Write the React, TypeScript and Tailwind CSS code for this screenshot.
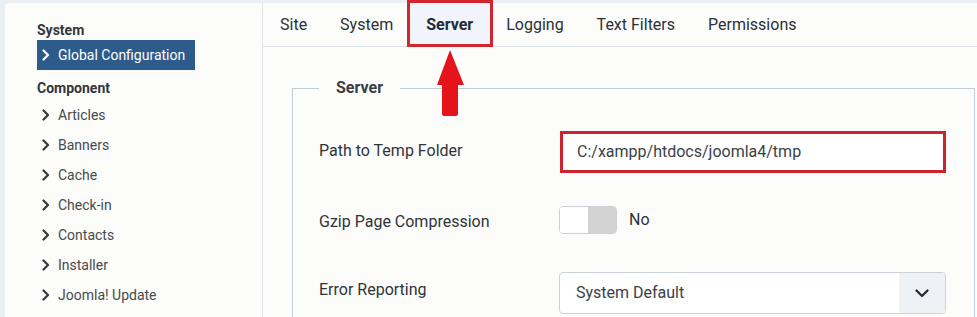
import React from 'react';

const font = { fontFamily: 'Roboto, "Liberation Sans", sans-serif' };

const sideItems = ['Articles', 'Banners', 'Cache', 'Check-in', 'Contacts', 'Installer', 'Joomla! Update'];
const tabs = ['Site', 'System', 'Server', 'Logging', 'Text Filters', 'Permissions'];

function Chevron({ className }: { className?: string }) {
  return (
    <svg width="8" height="12" viewBox="0 0 8 12" className={className}>
      <polyline points="1.5,1.5 6,6 1.5,10.5" fill="none" stroke="currentColor" strokeWidth="2.2" strokeLinecap="round" strokeLinejoin="round" />
    </svg>
  );
}

function Sidebar() {
  return (
    <div className="w-[257px] shrink-0 bg-[#fcfcfa] rounded-tl-[4px] pl-[32px] pt-[17px]">
      <div className="text-[14px] leading-[20px] font-bold text-[#32373c]">System</div>
      <div className="flex items-center h-[30px] w-fit bg-[#2d5b8c] text-white pl-[5px] pr-[10px] text-[14px]">
        <Chevron className="mr-[8px]" />
        <span>Global Configuration</span>
      </div>
      <div className="mt-[8px] mb-[2px] text-[14px] leading-[20px] font-bold text-[#32373c]">Component</div>
      {sideItems.map((item) => (
        <div key={item} className="flex items-center h-[30px] pl-[5px] text-[14px] text-[#464b50]">
          <Chevron className="mr-[8px] text-[#33383d]" />
          <span>{item}</span>
        </div>
      ))}
    </div>
  );
}

function Tabs() {
  return (
    <div className="flex h-[44px] border-b border-[#dde3e9] pl-[0.5px]">
      {tabs.map((t) => (
        <div
          key={t}
          className={
            t === 'Server'
              ? 'flex items-center px-[16.5px] text-[16px] font-bold text-[#1e2b3b] bg-[#f1f4f8]'
              : 'flex items-center px-[16.5px] text-[16px] text-[#2b3036]'
          }
        >
          {t}
        </div>
      ))}
    </div>
  );
}

function ServerFieldset() {
  return (
    <fieldset className="mt-[29px] ml-[29px] mr-[2px] border border-[#c3ccd5] pl-[26px] pr-[28px] pb-[20px]">
      <legend className="px-[17px] text-[16px] leading-[24px] font-bold text-[#3a3f45]">Server</legend>
      <div className="pt-[31px]">
        <div className="flex items-start">
          <div className="w-[241px] pt-[8px] text-[16px] leading-[24px] text-[#2f3439]">Path to Temp Folder</div>
          <div className="flex items-center h-[42px] w-[386px] border-[3px] border-[#cd232d] bg-white pl-[14px] text-[16px] text-[#3b4147]">
            C:/xampp/htdocs/joomla4/tmp
          </div>
        </div>
        <div className="flex items-start mt-[33px]">
          <div className="w-[240px] pt-[4px] text-[16px] leading-[24px] text-[#2f3439]">Gzip Page Compression</div>
          <div className="flex items-center">
            <div className="flex h-[28px] w-[58px] rounded-[4px] border border-[#cdd2d7] overflow-hidden">
              <div className="w-[28px] bg-white" />
              <div className="flex-1 bg-[#d3d3d3]" />
            </div>
            <span className="ml-[12px] text-[16px] text-[#2f3439]">No</span>
          </div>
        </div>
        <div className="flex items-start mt-[38px]">
          <div className="w-[240px] pt-[6px] text-[16px] leading-[24px] text-[#2f3439]">Error Reporting</div>
          <div className="flex h-[42px] w-[387px] rounded-[4px] border border-[#cbd2da] bg-white overflow-hidden">
            <div className="flex-1 flex items-center pl-[16px] text-[16px] text-[#3b4147]">System Default</div>
            <div className="w-[46px] flex items-center justify-center bg-[#eef2f6]">
              <svg width="14" height="9" viewBox="0 0 14 9">
                <polyline points="1.5,1.5 7,7 12.5,1.5" fill="none" stroke="#22272c" strokeWidth="2.2" strokeLinecap="round" strokeLinejoin="round" />
              </svg>
            </div>
          </div>
        </div>
      </div>
    </fieldset>
  );
}

export default function App() {
  return (
    <div className="relative w-[977px] h-[317px] overflow-hidden bg-[#e9eef3] pt-[3px] pl-[5px]" style={font}>
      <div className="flex h-full">
        <Sidebar />
        <div className="flex-1 bg-[#fcfcfa] border-l border-[#e2e6ea]">
          <Tabs />
          <ServerFieldset />
        </div>
      </div>

      {/* annotation: red box round the Server tab */}
      <div className="absolute left-[407px] top-[0px] w-[86px] h-[47px] border-[3px] border-[#d22530]" />

      {/* annotation: red arrow */}
      <svg className="absolute left-[436px] top-[49px]" width="30" height="69" viewBox="0 0 30 69">
        <path
          d="M14 1 L28 36 L22 36 L22 65 Q22 67 20 67 L8 67 Q6 67 6 65 L6 36 L1 36 Z"
          fill="#e5141c"
        />
      </svg>
    </div>
  );
}
